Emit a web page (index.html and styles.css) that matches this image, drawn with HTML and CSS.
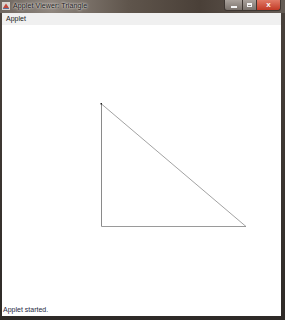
FILE: index.html
```html
<!DOCTYPE html>
<html>
<head>
<meta charset="utf-8">
<link rel="stylesheet" href="styles.css">
</head>
<body>
<div class="window">
  <div class="titlebar">
    <div class="title-left">
      <svg class="app-icon" width="8" height="8" viewBox="0 0 8 8">
        <rect x="0" y="0" width="8" height="8" fill="#d9d4cf"/>
        <path d="M1 6 L4 1.5 L7 6 Z" fill="#c0463a"/>
        <rect x="1" y="6" width="6" height="1" fill="#5a6f9a"/>
      </svg>
      <span class="title-text">Applet Viewer: Triangle</span>
    </div>
    <div class="controls">
      <div class="btn btn-min"><span class="glyph-min"></span></div>
      <div class="btn btn-max"><span class="glyph-max"></span></div>
      <div class="btn btn-close"><span class="glyph-close">x</span></div>
    </div>
  </div>
  <div class="client">
    <div class="menubar"><span class="menu-item">Applet</span></div>
    <div class="canvas">
      <svg class="drawing" width="279" height="278" viewBox="0 0 279 278">
        <line x1="99.5" y1="79" x2="99.5" y2="201.5" stroke="#8a8a8a" stroke-width="1"/>
        <line x1="99.5" y1="201.5" x2="244" y2="201.5" stroke="#9a9a9a" stroke-width="1"/>
        <line x1="99.5" y1="79" x2="244" y2="201.5" stroke="#8a8a8a" stroke-width="0.8"/>
        <rect x="98.5" y="78" width="1.5" height="1.5" fill="#222"/>
      </svg>
      <div class="status">Applet started.</div>
    </div>
  </div>
</div>
</body>
</html>
```

FILE: styles.css
```css
html, body {
  margin: 0;
  padding: 0;
  background: #3a3430;
}
.window {
  width: 285px;
  height: 320px;
  display: flex;
  flex-direction: column;
  background: linear-gradient(to bottom, #4a423c, #2e2a27);
  font-family: "Liberation Sans", Arial, sans-serif;
  overflow: hidden;
}
.titlebar {
  height: 13px;
  display: flex;
  justify-content: space-between;
  align-items: flex-start;
  background: linear-gradient(to right, #6e665f 0%, #8f867e 18%, #5f554c 45%, #4a4038 70%, #665d56 100%);
}
.title-left {
  display: flex;
  align-items: center;
  gap: 3px;
  padding-left: 2px;
  height: 12px;
}
.app-icon {
  display: block;
}
.title-text {
  font-size: 7px;
  color: #1c1c1c;
  text-shadow: 0 0 3px #e8e4e0, 0 0 2px #e8e4e0;
  line-height: 12px;
  letter-spacing: 0.1px;
}
.controls {
  display: flex;
  margin-right: 4px;
  height: 11px;
}
.btn {
  height: 11px;
  display: flex;
  align-items: center;
  justify-content: center;
  box-sizing: border-box;
  border: 1px solid #3e3631;
  border-top: none;
}
.btn-min {
  width: 19px;
  background: linear-gradient(to bottom, #aaa29c, #7a726c);
  border-radius: 0 0 0 3px;
}
.btn-max {
  width: 14px;
  background: linear-gradient(to bottom, #aaa29c, #7a726c);
  border-left: none;
}
.btn-close {
  width: 24px;
  background: linear-gradient(to bottom, #e07a66, #c23a26);
  border-left: none;
  border-radius: 0 0 3px 0;
}
.glyph-min {
  display: block;
  width: 6px;
  height: 2px;
  background: #f4f4f4;
  margin-top: 3px;
}
.glyph-max {
  display: block;
  width: 5px;
  height: 4px;
  border: 1px solid #f4f4f4;
  border-top-width: 2px;
  box-sizing: border-box;
}
.glyph-close {
  font-size: 8px;
  font-weight: bold;
  color: #fafafa;
  line-height: 8px;
}
.client {
  flex: 1;
  display: flex;
  flex-direction: column;
  margin: 0 4px 4px 2px;
  background: #ffffff;
}
.menubar {
  height: 12px;
  background: #f0f0f0;
  display: flex;
  align-items: center;
  padding-left: 4px;
}
.menu-item {
  font-size: 7px;
  color: #1a1a1a;
  line-height: 12px;
}
.canvas {
  flex: 1;
  display: flex;
  flex-direction: column;
  background: #ffffff;
}
.drawing {
  display: block;
  flex: 1;
}
.status {
  height: 12px;
  padding-top: 1px;
  font-size: 7px;
  line-height: 12px;
  padding-left: 1px;
  color: #1f2a44;
}
```
